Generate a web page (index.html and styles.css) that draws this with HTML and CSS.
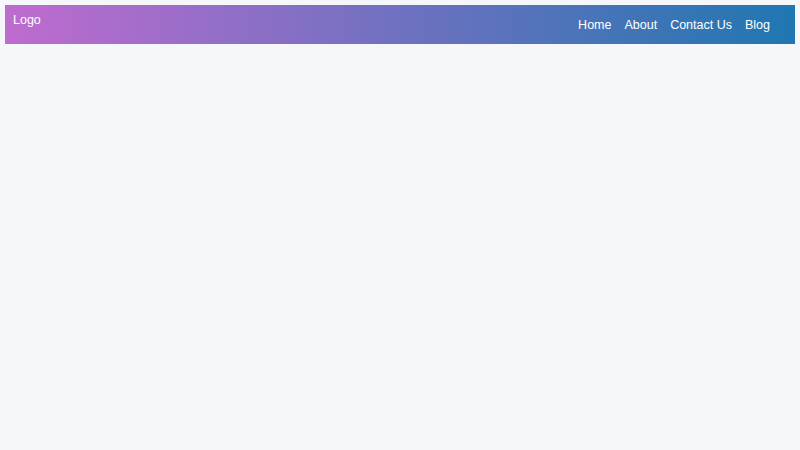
FILE: index.html
```html
<!DOCTYPE html>
<html lang="en">
<head>
    <meta charset="UTF-8">
    <meta name="viewport" content="width=device-width, initial-scale=1.0">
    <title>Header</title>
    <link rel="stylesheet" href="styles.css">
</head>
<body>
    <header class="site-header">
        <div class="logo">Logo</div>
        <nav class="main-nav">
            <a href="#">Home</a>
            <a href="#">About</a>
            <a href="#">Contact Us</a>
            <a href="#">Blog</a>
        </nav>
    </header>
</body>
</html>
```

FILE: styles.css
```css
html {
    background: #f5f7fa;
}

body {
    margin: 5px;
    font-family: "Liberation Sans", Arial, sans-serif;
    font-size: 12.5px;
    color: white;
}

.site-header {
    display: flex;
    justify-content: space-between;
    align-items: flex-start;
    height: 39px;
    background: linear-gradient(to right, #bf6bcf, #1f77b1);
}

.logo {
    padding: 8px;
}

.main-nav {
    display: flex;
    gap: 13px;
    align-self: center;
    padding-right: 25px;
}

.main-nav a {
    color: white;
    text-decoration: none;
}
```
